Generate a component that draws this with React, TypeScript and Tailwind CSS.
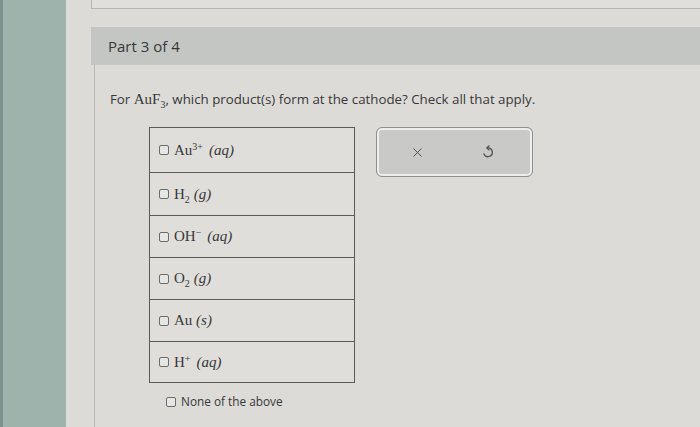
import { X } from "lucide-react";

const serif = "font-['Liberation_Serif',serif]";
const sans = "font-['Open_Sans',sans-serif]";

const Box = () => (
  <span className="inline-block w-[10px] h-[10px] border border-[#6b6b6b] rounded-[2px] bg-[#e6e6e4] mr-[5px] shrink-0" />
);

const Sup = ({ children }: { children: React.ReactNode }) => (
  <sup className="text-[10px] relative -top-[5px]">{children}</sup>
);
const Sub = ({ children }: { children: React.ReactNode }) => (
  <sub className="text-[10px] relative top-[4px]">{children}</sub>
);

const rows: { h: string; label: React.ReactNode }[] = [
  {
    h: "h-[45px]",
    label: (
      <>
        Au<Sup>3+</Sup>
        <span className="italic ml-[6px]">(aq)</span>
      </>
    ),
  },
  {
    h: "h-[43px]",
    label: (
      <>
        H<Sub>2</Sub>
        <span className="italic ml-[4px]">(g)</span>
      </>
    ),
  },
  {
    h: "h-[42px]",
    label: (
      <>
        OH<Sup>−</Sup>
        <span className="italic ml-[6px]">(aq)</span>
      </>
    ),
  },
  {
    h: "h-[42px]",
    label: (
      <>
        O<Sub>2</Sub>
        <span className="italic ml-[4px]">(g)</span>
      </>
    ),
  },
  {
    h: "h-[42px]",
    label: (
      <>
        Au <span className="italic">(s)</span>
      </>
    ),
  },
  {
    h: "h-[41px]",
    label: (
      <>
        H<Sup>+</Sup>
        <span className="italic ml-[6px]">(aq)</span>
      </>
    ),
  },
];

const UndoIcon = () => (
  <svg width="14" height="14" viewBox="0 0 24 24" fill="none" stroke="#555" strokeWidth="2.4" strokeLinecap="round" strokeLinejoin="round">
    <path d="M11 5 A7.5 7.5 0 1 1 5 15.5" />
    <polyline points="13.5,1.8 10,5 13.5,8.2" />
  </svg>
);

export default function App() {
  return (
    <div className="flex w-[700px] h-[427px] overflow-hidden bg-[#dcdbd8] text-[#383838]">
      <aside className="w-[66px] shrink-0 bg-[#9fb3ad] border-l-[3px] border-[#7e928d]" />
      <main className="flex-1 flex flex-col pl-[25px]">
        <div className="h-[9px] bg-[#e0dfdc] border-b border-l border-[#b5b5b1]" />
        <div className="h-[18px]" />
        <div className={`h-[38px] bg-[#c3c6c3] flex items-center pl-[17px] text-[15px] ${sans}`}>
          Part 3 of 4
        </div>
        <section className="flex-1 border-l border-[#b9b9b5] ml-[3px] pl-[15px] pt-[24px]">
          <p className={`text-[13.3px] leading-[20px] ${sans}`}>
            For <span className={`${serif} text-[15px]`}>AuF<Sub>3</Sub></span>, which
            product(s) form at the cathode? Check all that apply.
          </p>
          <div className="flex items-start gap-[21px] mt-[18px] ml-[39px]">
            <div>
              <div className="w-[206px] border-t border-x border-[#5a5a5a] bg-[#dfdedb]">
                {rows.map((r, i) => (
                  <div
                    key={i}
                    className={`${r.h} border-b border-[#5a5a5a] flex items-center pl-[9px] text-[15px] ${serif}`}
                  >
                    <Box />
                    <span>{r.label}</span>
                  </div>
                ))}
              </div>
              <div className={`flex items-center mt-[10px] pl-[17px] text-[11.8px] ${sans}`}>
                <Box />
                None of the above
              </div>
            </div>
            <div className="w-[157px] h-[50px] rounded-[6px] border border-[#8f8f8d] bg-[#c9c9c7] shadow-[inset_0_0_0_2px_#eeeeec] flex items-center justify-between pl-[33px] pr-[37px]">
              <X size={15} strokeWidth={1.6} className="text-[#555]" />
              <UndoIcon />
            </div>
          </div>
        </section>
      </main>
    </div>
  );
}
